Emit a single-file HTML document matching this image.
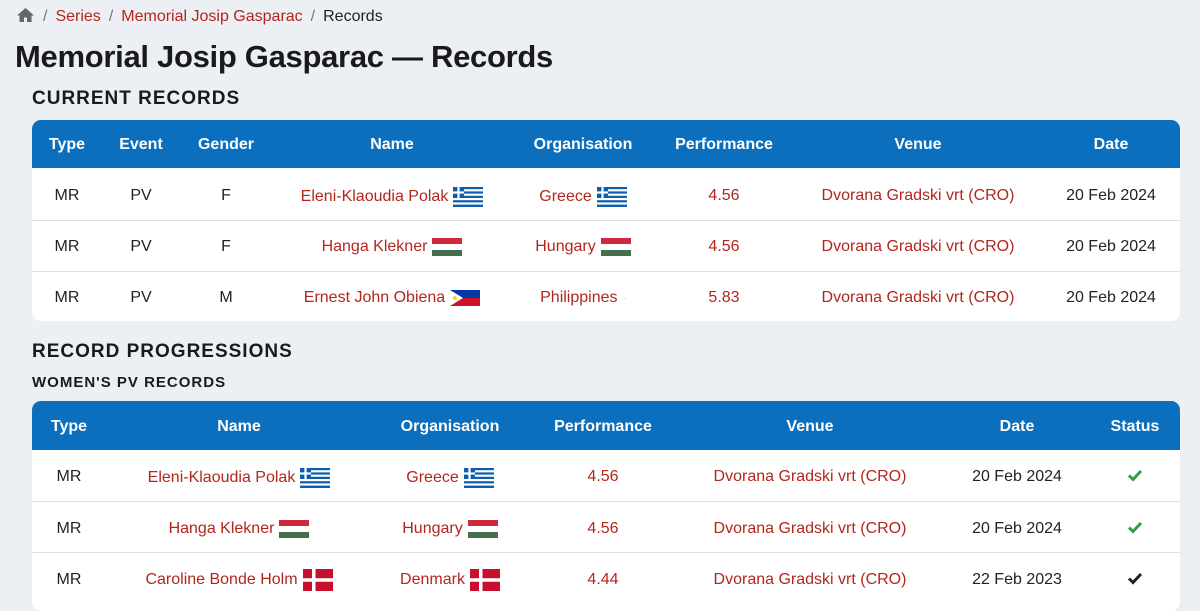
<!DOCTYPE html>
<html><head><meta charset="utf-8"><style>
*{margin:0;padding:0;box-sizing:border-box}
body{width:1200px;height:600px;overflow:hidden;background:#eceff3;font-family:"Liberation Sans",Arial,sans-serif;color:#222;position:relative}
.a{position:absolute}
.red{color:#b3261e}
.bc{top:7px;left:16px;font-size:16px;color:#222}
.bc span.s{color:#777;margin:0 8px}
h1{position:absolute;left:15px;top:39px;font-size:31px;font-weight:bold;color:#1a1a1a;letter-spacing:-0.3px}
.h2{font-size:19px;font-weight:bold;letter-spacing:1px;color:#1a1a1a}
.h3{font-size:15px;font-weight:bold;letter-spacing:1px;color:#1a1a1a}
.tbl{position:absolute;left:32px;width:1148px;background:#fff;border-radius:9px;overflow:hidden}
.hd{position:absolute;left:0;top:0;width:100%;background:#0b6fbd}
.row{position:absolute;left:0;width:100%;border-top:1px solid #dde1e5}
.c{position:absolute;width:260px;text-align:center;font-size:16px;white-space:nowrap;display:flex;justify-content:center;align-items:center;gap:5px}
.hd .c{color:#fff;font-weight:bold}
svg{display:block}
</style></head><body>
<div class="a bc"><svg style="display:inline-block;vertical-align:-2px" width="19" height="16" viewBox="0 0 19 16"><path d="M9.5 1L1 8.5h2.5V15h4.5v-4.5h3V15h4.5V8.5H18z" fill="#666"/></svg><span class="s">/</span><span class="red">Series</span><span class="s">/</span><span class="red">Memorial Josip Gasparac</span><span class="s">/</span>Records</div>
<h1>Memorial Josip Gasparac — Records</h1>
<div class="a h2" style="left:32px;top:88px">CURRENT RECORDS</div>

<svg width="0" height="0" style="position:absolute"><defs>
<g id="gr"><rect width="30" height="20" fill="#fff"/><g fill="#0d5eaf"><rect y="0" width="30" height="2.2"/><rect y="4.4" width="30" height="2.2"/><rect y="8.8" width="30" height="2.2"/><rect y="13.2" width="30" height="2.2"/><rect y="17.6" width="30" height="2.4"/><rect width="11" height="11"/></g><rect x="4.4" width="2.2" height="11" fill="#fff"/><rect y="4.4" width="11" height="2.2" fill="#fff"/></g>
<g id="hu"><rect width="30" height="6" fill="#cd2a3e"/><rect y="6" width="30" height="6" fill="#fff"/><rect y="12" width="30" height="6" fill="#436f4d"/></g>
<g id="ph"><rect width="30" height="8" fill="#0038a8"/><rect y="8" width="30" height="8" fill="#ce1126"/><path d="M0 0L13 8L0 16z" fill="#fff"/><circle cx="5" cy="8" r="2" fill="#fcd116"/></g>
<g id="dk"><rect width="30" height="22" fill="#c8102e"/><rect x="9" width="3.5" height="22" fill="#fff"/><rect y="9.25" width="30" height="3.5" fill="#fff"/></g>
</defs></svg>

<div class="tbl" style="top:120px;height:201px">
<div class="hd" style="height:48px">
<div class="c" style="left:-95px;top:16px">Type</div>
<div class="c" style="left:-21px;top:16px">Event</div>
<div class="c" style="left:64px;top:16px">Gender</div>
<div class="c" style="left:230px;top:16px">Name</div>
<div class="c" style="left:421px;top:16px">Organisation</div>
<div class="c" style="left:562px;top:16px">Performance</div>
<div class="c" style="left:756px;top:16px">Venue</div>
<div class="c" style="left:949px;top:16px">Date</div>
</div>
<div class="row" style="top:48px;height:52px;border-top:none">
<div class="c" style="left:-95px;top:19px">MR</div><div class="c" style="left:-21px;top:19px">PV</div><div class="c" style="left:64px;top:19px">F</div>
<div class="c red" style="left:230px;top:19px">Eleni-Klaoudia Polak <svg width="30" height="20"><use href="#gr"/></svg></div>
<div class="c red" style="left:421px;top:19px">Greece <svg width="30" height="20"><use href="#gr"/></svg></div>
<div class="c red" style="left:562px;top:19px">4.56</div>
<div class="c red" style="left:756px;top:19px">Dvorana Gradski vrt (CRO)</div>
<div class="c" style="left:949px;top:19px">20 Feb 2024</div>
</div>
<div class="row" style="top:100px;height:51px">
<div class="c" style="left:-95px;top:17px">MR</div><div class="c" style="left:-21px;top:17px">PV</div><div class="c" style="left:64px;top:17px">F</div>
<div class="c red" style="left:230px;top:17px">Hanga Klekner <svg width="30" height="18"><use href="#hu"/></svg></div>
<div class="c red" style="left:421px;top:17px">Hungary <svg width="30" height="18"><use href="#hu"/></svg></div>
<div class="c red" style="left:562px;top:17px">4.56</div>
<div class="c red" style="left:756px;top:17px">Dvorana Gradski vrt (CRO)</div>
<div class="c" style="left:949px;top:17px">20 Feb 2024</div>
</div>
<div class="row" style="top:151px;height:50px">
<div class="c" style="left:-95px;top:17px">MR</div><div class="c" style="left:-21px;top:17px">PV</div><div class="c" style="left:64px;top:17px">M</div>
<div class="c red" style="left:230px;top:17px">Ernest John Obiena <svg width="30" height="16"><use href="#ph"/></svg></div>
<div class="c red" style="left:421px;top:17px">Philippines <span style="color:#bbb;font-size:10px">·</span></div>
<div class="c red" style="left:562px;top:17px">5.83</div>
<div class="c red" style="left:756px;top:17px">Dvorana Gradski vrt (CRO)</div>
<div class="c" style="left:949px;top:17px">20 Feb 2024</div>
</div>
</div>

<div class="a h2" style="left:32px;top:341px">RECORD PROGRESSIONS</div>
<div class="a h3" style="left:32px;top:374px">WOMEN'S PV RECORDS</div>

<div class="tbl" style="top:401px;height:210px">
<div class="hd" style="height:49px">
<div class="c" style="left:-93px;top:17px">Type</div>
<div class="c" style="left:77px;top:17px">Name</div>
<div class="c" style="left:288px;top:17px">Organisation</div>
<div class="c" style="left:441px;top:17px">Performance</div>
<div class="c" style="left:648px;top:17px">Venue</div>
<div class="c" style="left:855px;top:17px">Date</div>
<div class="c" style="left:973px;top:17px">Status</div>
</div>
<div class="row" style="top:49px;height:51px;border-top:none">
<div class="c" style="left:-93px;top:18px">MR</div>
<div class="c red" style="left:77px;top:18px">Eleni-Klaoudia Polak <svg width="30" height="20"><use href="#gr"/></svg></div>
<div class="c red" style="left:288px;top:18px">Greece <svg width="30" height="20"><use href="#gr"/></svg></div>
<div class="c red" style="left:441px;top:18px">4.56</div>
<div class="c red" style="left:648px;top:18px">Dvorana Gradski vrt (CRO)</div>
<div class="c" style="left:855px;top:18px">20 Feb 2024</div>
<div class="c" style="left:973px;top:18px"><svg width="16" height="14" viewBox="0 0 16 14"><path d="M2 7.5l4 4L14 3" stroke="#2ea043" stroke-width="3" fill="none"/></svg></div>
</div>
<div class="row" style="top:100px;height:51px">
<div class="c" style="left:-93px;top:18px">MR</div>
<div class="c red" style="left:77px;top:18px">Hanga Klekner <svg width="30" height="18"><use href="#hu"/></svg></div>
<div class="c red" style="left:288px;top:18px">Hungary <svg width="30" height="18"><use href="#hu"/></svg></div>
<div class="c red" style="left:441px;top:18px">4.56</div>
<div class="c red" style="left:648px;top:18px">Dvorana Gradski vrt (CRO)</div>
<div class="c" style="left:855px;top:18px">20 Feb 2024</div>
<div class="c" style="left:973px;top:18px"><svg width="16" height="14" viewBox="0 0 16 14"><path d="M2 7.5l4 4L14 3" stroke="#2ea043" stroke-width="3" fill="none"/></svg></div>
</div>
<div class="row" style="top:151px;height:60px">
<div class="c" style="left:-93px;top:18px">MR</div>
<div class="c red" style="left:77px;top:16px">Caroline Bonde Holm <svg width="30" height="22"><use href="#dk"/></svg></div>
<div class="c red" style="left:288px;top:16px">Denmark <svg width="30" height="22"><use href="#dk"/></svg></div>
<div class="c red" style="left:441px;top:18px">4.44</div>
<div class="c red" style="left:648px;top:18px">Dvorana Gradski vrt (CRO)</div>
<div class="c" style="left:855px;top:18px">22 Feb 2023</div>
<div class="c" style="left:973px;top:18px"><svg width="16" height="14" viewBox="0 0 16 14"><path d="M2 7.5l4 4L14 3" stroke="#222" stroke-width="3" fill="none"/></svg></div>
</div>
</div>
</body></html>
